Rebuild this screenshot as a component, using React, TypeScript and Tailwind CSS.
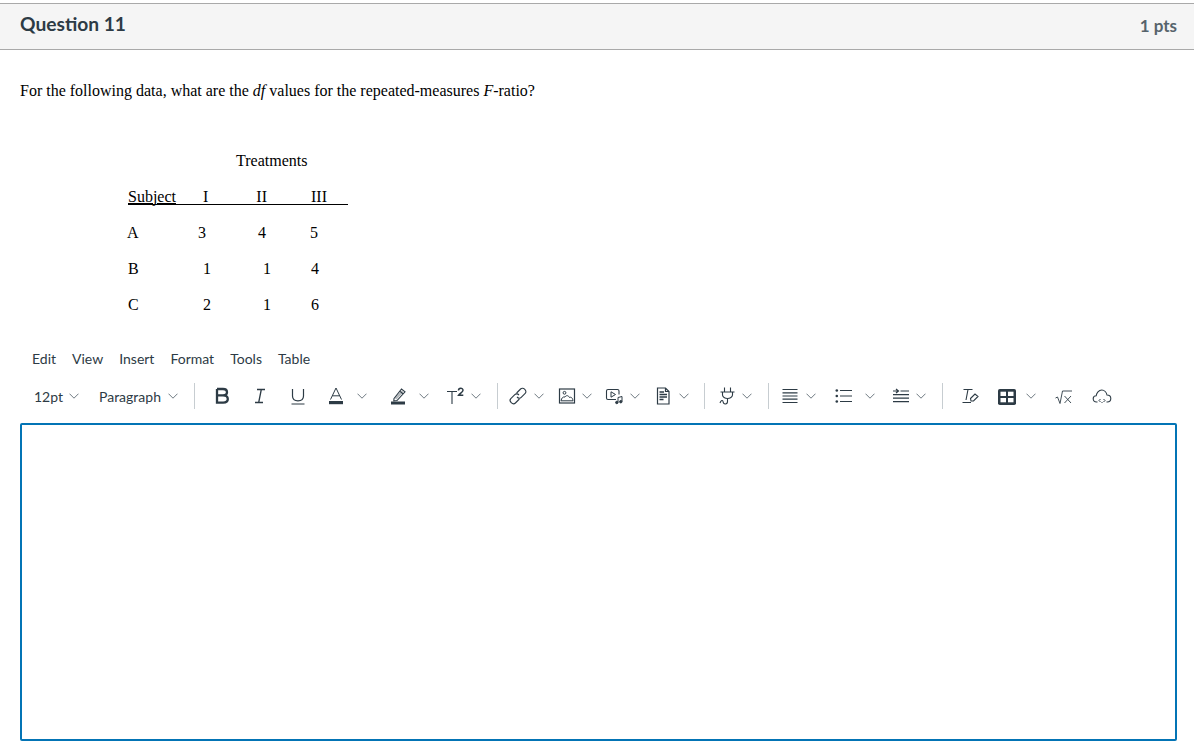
import type { ReactNode } from "react";

const ink = "#2D3B45";

function Chevron({ className }: { className: string }) {
  return (
    <svg className={`h-[6px] w-[10px] shrink-0 ${className}`} viewBox="0 0 10 6" fill="none">
      <path d="M0.5 0.7 L5 5.2 L9.5 0.7" stroke="#4a5862" strokeWidth="0.8" />
    </svg>
  );
}

function Divider({ className }: { className: string }) {
  return <div className={`h-[26px] w-px shrink-0 bg-[#c7cdd1] ${className}`} />;
}

function Icon({ className, children }: { className: string; children: ReactNode }) {
  return (
    <svg className={`h-5 w-5 shrink-0 ${className}`} viewBox="0 0 20 20" fill="none" stroke={ink} strokeWidth="1">
      {children}
    </svg>
  );
}

function MenuBar() {
  return (
    <div className="flex h-5 items-center pl-8 text-[14px] text-[#2D3B45]">
      <span>Edit</span>
      <span className="ml-[16px]">View</span>
      <span className="ml-[16px]">Insert</span>
      <span className="ml-[16px]">Format</span>
      <span className="ml-[16px]">Tools</span>
      <span className="ml-[16px]">Table</span>
    </div>
  );
}

function Toolbar() {
  return (
    <div className="mt-[8px] flex h-[40px] items-center pl-[34px] text-[14px] text-[#2D3B45]">
      <span className="w-[35px] shrink-0">12pt</span>
      <Chevron className="" />
      <span className="ml-5 w-[62px] shrink-0">Paragraph</span>
      <Chevron className="ml-[7px]" />
      <Divider className="ml-4" />

      {/* bold / italic / underline */}
      <Icon className="ml-[17px]">
        <path d="M5 3 H11 C13.8 3 15 4.4 15 6.3 C15 8.2 13.6 9.4 11 9.4 H5 M11 9.4 C14.2 9.4 15.8 10.8 15.8 13 C15.8 15.3 14.2 16.6 11.2 16.6 H5 V3" strokeWidth="2.3" />
      </Icon>
      <Icon className="ml-[18px]">
        <path d="M7 3.5 H15 M5 16.5 H13 M11.3 3.5 L8.7 16.5" strokeWidth="1.3" />
      </Icon>
      <Icon className="ml-[18px]">
        <path d="M4.5 3 V10 C4.5 13.2 6.6 14.8 10 14.8 C13.4 14.8 15.5 13.2 15.5 10 V3 M3.5 18 H16.5" strokeWidth="1.2" />
      </Icon>

      {/* text colour, highlight, superscript */}
      <Icon className="ml-[18px]">
        <path d="M4.5 13.5 L10 2 L15.5 13.5 M6.3 9.8 H13.7" strokeWidth="1" />
        <rect x="3" y="15" width="14" height="3.2" fill={ink} stroke="none" />
      </Icon>
      <Chevron className="ml-[11px]" />
      <Icon className="ml-[21px]">
        <path d="M6 12.5 L13.5 3 L17 5.8 L9 14.5 L5.8 14.8 Z M11.8 5.2 L15.2 8" strokeWidth="1.1" />
        <path d="M6.5 12 L13.5 4.5 L15.5 6 L8.5 13.5 Z" fill={ink} fillOpacity="0.35" stroke="none" />
        <rect x="3" y="15.5" width="14" height="3" fill={ink} stroke="none" />
      </Icon>
      <Chevron className="ml-[11px]" />
      <Icon className="ml-4">
        <path d="M2 5.5 H12 M7 5.5 V18" strokeWidth="1.1" />
        <path d="M13.5 4.5 C13.5 1.6 18 1.6 18 4.2 C18 6.2 14.8 7.2 13.5 9.3 H18.3" strokeWidth="1.5" />
      </Icon>
      <Chevron className="ml-[6px]" />
      <Divider className="ml-4" />

      {/* link, image, media, document */}
      <Icon className="ml-[10px]">
        <path d="M8.6 7 L12.6 3 C13.6 2 15.4 2 16.8 3.4 C18.2 4.8 18.2 6.4 17.2 7.4 L13.2 11.4 C12.2 12.4 10.4 12.4 9 11 M11.4 13 L7.4 17 C6.4 18 4.6 18 3.2 16.6 C1.8 15.2 1.8 13.6 2.8 12.6 L6.8 8.6 C7.8 7.6 9.6 7.6 11 9" strokeWidth="1.1" />
      </Icon>
      <Chevron className="ml-[6px]" />
      <Icon className="ml-[13px]">
        <rect x="2.5" y="3" width="15" height="14" strokeWidth="1.2" />
        <circle cx="7.5" cy="6.8" r="1.4" />
        <path d="M4 14.8 H16 C15.5 11.5 14 10.8 12.5 11.5 C11.5 9.5 9.5 8.8 8 11 C6 10.5 4.5 12 4 14.8 Z" />
      </Icon>
      <Chevron className="ml-[5px]" />
      <Icon className="ml-3">
        <path d="M12 13.5 H4 C3 13.5 2.5 13 2.5 12 V5 C2.5 4 3 3.5 4 3.5 H13.5 C14.5 3.5 15 4 15 5 V8.5" strokeWidth="1.1" />
        <path d="M7 5.8 L11.5 8.5 L7 11.2 Z" />
        <path d="M14 16.5 V11.5 L18 10.5 V15.5" />
        <circle cx="12.8" cy="16.5" r="1.2" fill={ink} />
        <circle cx="16.8" cy="15.7" r="1.2" fill={ink} />
      </Icon>
      <Chevron className="ml-[6px]" />
      <Icon className="ml-[13px]">
        <path d="M4.5 2 H12.5 L16 5.5 V18 H4.5 Z M12.5 2 V5.5 H16" strokeWidth="1.2" />
        <path d="M6.5 6 H11 M6.5 8.5 H14 M6.5 11 H14 M6.5 13.5 H10.5" strokeWidth="1.4" />
      </Icon>
      <Chevron className="ml-[6px]" />
      <Divider className="ml-[15px]" />

      {/* plugin */}
      <Icon className="ml-3">
        <path d="M7.5 1.5 V6 M13.5 1.5 V6 M3.5 6 H17.5 M5.5 6 V9 C5.5 11 8 12.5 10.5 12.5 C13 12.5 15.5 11 15.5 9 V6 M10.5 12.5 V15.5 C10.5 18.5 6.5 19 6 15.5 C5.7 14 4 14 3 17" strokeWidth="1.1" />
      </Icon>
      <Chevron className="ml-[5px]" />
      <Divider className="ml-4" />

      {/* align, bullets, indent */}
      <Icon className="ml-[11px]">
        <path d="M2.5 3.5 H17.5 M2.5 6.8 H17.5 M2.5 10 H17.5 M2.5 13.2 H17.5 M2.5 16.5 H17.5" strokeWidth="1.2" />
      </Icon>
      <Chevron className="ml-[6px]" />
      <Icon className="ml-[18px]">
        <path d="M6 4.5 H18 M6 10 H18 M6 15.5 H18" strokeWidth="1.2" />
        <circle cx="2.8" cy="4.5" r="1.3" fill={ink} stroke="none" />
        <circle cx="2.8" cy="10" r="1.3" fill={ink} stroke="none" />
        <circle cx="2.8" cy="15.5" r="1.3" fill={ink} stroke="none" />
      </Icon>
      <Chevron className="ml-[11px]" />
      <Icon className="ml-4">
        <path d="M2 5 H7 M5 3 L7.5 5 L5 7 M9.5 5 H18 M2 8.7 H18 M2 12.2 H18 M2 15.7 H18" strokeWidth="1.2" />
      </Icon>
      <Chevron className="ml-[5px]" />
      <Divider className="ml-4" />

      {/* clear formatting, table, equation, cloud */}
      <Icon className="ml-[17px]">
        <path d="M3.5 3.5 H12.5 M8 3.5 L6 14 M2.5 16.5 H11" strokeWidth="1.1" />
        <path d="M10.5 12.5 L15 8 L18 10.5 L13.5 15 H11 Z" strokeWidth="1.1" />
      </Icon>
      <Icon className="ml-[17px]">
        <rect x="1" y="3" width="18" height="16" rx="1.8" fill={ink} stroke="none" />
        <rect x="3.5" y="5.7" width="5.5" height="4.3" fill="#fff" stroke="none" />
        <rect x="11" y="5.7" width="5.5" height="4.3" fill="#fff" stroke="none" />
        <rect x="3.5" y="12" width="5.5" height="4.3" fill="#fff" stroke="none" />
        <rect x="11" y="12" width="5.5" height="4.3" fill="#fff" stroke="none" />
      </Icon>
      <Chevron className="ml-[9px]" />
      <Icon className="ml-[18px]">
        <path d="M1.5 12 L3.5 11 L6 17.5 L8.5 5 H18" strokeWidth="0.9" />
        <path d="M10.5 10 L17 17 M17 10 L10.5 17" strokeWidth="0.9" />
      </Icon>
      <Icon className="ml-[18px]">
        <path d="M5.5 16 H4.5 C2.5 16 1.2 14.6 1.2 12.8 C1.2 11 2.6 9.8 4.2 9.8 C4.5 7 6.8 4 9.8 4 C12.4 4 14.5 6.6 15 9 C17.2 9 18.8 10.5 18.8 12.5 C18.8 14.6 17.2 16 15.2 16 H14.5" strokeWidth="1.1" />
        <path d="M8.5 13 L7 14.5 L8.5 16 M11.5 13 L13 14.5 L11.5 16 M10 16 V17" />
      </Icon>
    </div>
  );
}

function DataTable() {
  return (
    <div className="ml-[127px] mt-[42px] font-['Liberation_Serif',serif] text-[16px] text-black">
      <div className="flex h-9 items-center pl-[109px]">Treatments</div>
      <div className="flex h-9 items-center">
        <div className="ml-px flex h-[16px] w-[220px] items-center border-b border-black">
          <span className="underline">Subject</span>
          <span className="ml-[27px]">I</span>
          <span className="ml-[48px]">II</span>
          <span className="ml-[44px]">III</span>
        </div>
      </div>
      <div className="flex h-9 items-center">
        <span className="w-[71px]">A</span>
        <span className="w-[60px]">3</span>
        <span>4</span>
        <span className="ml-[44px]">5</span>
      </div>
      <div className="flex h-9 items-center pl-px">
        <span className="w-[75px]">B</span>
        <span className="w-[60px]">1</span>
        <span>1</span>
        <span className="ml-[40px]">4</span>
      </div>
      <div className="flex h-9 items-center pl-px">
        <span className="w-[75px]">C</span>
        <span className="w-[60px]">2</span>
        <span>1</span>
        <span className="ml-[40px]">6</span>
      </div>
    </div>
  );
}

export default function App() {
  return (
    <div className="flex h-[744px] w-[1194px] flex-col overflow-hidden bg-white pt-[3px] font-['Lato',sans-serif]">
      <header className="flex h-[47px] shrink-0 items-center justify-between border-y border-[#a9a9a9] bg-[#f5f5f5] pb-[2px] pl-5 pr-[17px]">
        <h2 className="pb-[2px] text-[19.2px] font-bold text-[#2D3B45]">Question 11</h2>
        <span className="text-[17px] font-bold text-[#56636c]">1 pts</span>
      </header>
      <p className="ml-5 mt-[31px] font-['Liberation_Serif',serif] text-[16px] leading-[20px] text-black">
        For the following data, what are the <em>df</em> values for the repeated-measures <em>F</em>-ratio?
      </p>
      <DataTable />
      <div className="mt-[25px]">
        <MenuBar />
        <Toolbar />
      </div>
      <div className="ml-5 mt-[7px] h-[318px] w-[1157px] rounded-[2px] border-2 border-[#0374B5]" />
    </div>
  );
}
